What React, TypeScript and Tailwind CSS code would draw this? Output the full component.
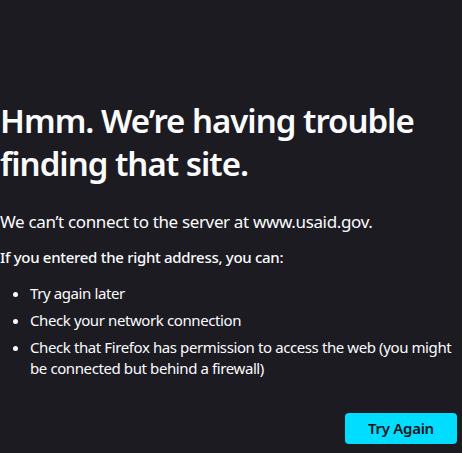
export default function App() {
  return (
    <div
      className="min-h-[453px] w-full bg-[#1c1b22] text-[#fbfbfe] pt-[99px] pr-[5px]"
      style={{ fontFamily: '"Noto Sans", "Open Sans", sans-serif' }}
    >
      <h1 className="text-[33px] leading-[43px] font-semibold tracking-[-1px]">
        Hmm. We’re having trouble finding that site.
      </h1>
      <p className="mt-[25px] text-[17px] leading-[24px] tracking-[-0.35px]">
        We can’t connect to the server at www.usaid.gov.
      </p>
      <p className="mt-[13px] text-[15px] leading-[21px] font-medium tracking-[-0.3px]">
        If you entered the right address, you can:
      </p>
      <ul className="mt-[15px] pl-[30px] list-disc text-[15px] leading-[21px] tracking-[-0.4px] flex flex-col gap-[6px]">
        <li>Try again later</li>
        <li>Check your network connection</li>
        <li>Check that Firefox has permission to access the web (you might be connected but behind a firewall)</li>
      </ul>
      <div className="mt-[34px] flex justify-end">
        <button className="w-[112px] h-[31px] rounded-[4px] bg-[#00ddff] text-[#15141a] text-[15px] font-semibold tracking-[-0.3px]">
          Try Again
        </button>
      </div>
    </div>
  );
}
